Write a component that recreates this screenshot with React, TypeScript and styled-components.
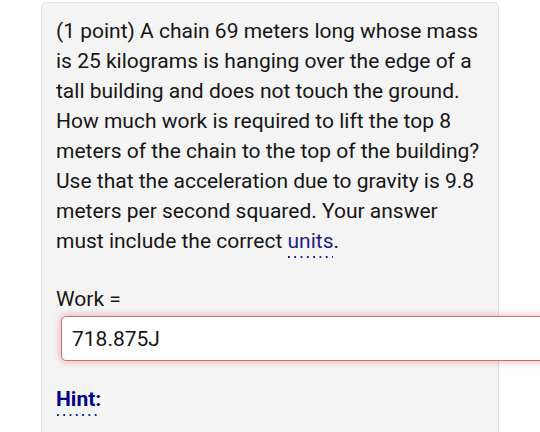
import styled, { createGlobalStyle } from 'styled-components';

const GlobalStyle = createGlobalStyle`
  html, body {
    margin: 0;
    padding: 0;
    background: #ffffff;
    overflow: hidden;
  }
  body {
    font-family: Roboto, "Liberation Sans", Arial, sans-serif;
    color: #161616;
  }
`;

const Page = styled.div`
  width: 540px;
  height: 432px;
  overflow: hidden;
  padding: 2px 0 0 41px;
  box-sizing: border-box;
`;

const Problem = styled.div`
  width: 458px;
  min-height: 460px;
  box-sizing: border-box;
  background: #f4f4f4;
  border: 1px solid #e2e2e2;
  border-radius: 5px;
  padding: 13px 14px 0 14px;
  font-size: 21px;
  line-height: 30px;
`;

const Statement = styled.p`
  margin: 0;
`;

const Link = styled.span<{ $bold?: boolean }>`
  color: ${p => (p.$bold ? '#000088' : '#1f1f8a')};
  font-weight: ${p => (p.$bold ? 700 : 400)};
  padding-bottom: 5px;
  background-image: linear-gradient(to right, #1c1c8c 2px, transparent 2px);
  background-size: 6.3px 2px;
  background-repeat: repeat-x;
  background-position: 1px 100%;
  cursor: help;
`;

const AnswerLabel = styled.div`
  margin-top: 28px;
`;

const AnswerInput = styled.div`
  margin: 2px 0 0 5px;
  width: 500px;
  height: 45px;
  box-sizing: border-box;
  background: #ffffff;
  border: 1px solid #c47272;
  border-radius: 5px;
  box-shadow: 0 0 7px 1px rgba(220, 90, 90, 0.4);
  padding: 0 10px;
  display: flex;
  align-items: center;
  font-size: 21px;
`;

const HintRow = styled.div`
  margin-top: 23px;
`;

export default function App() {
  return (
    <Page>
      <GlobalStyle />
      <Problem>
        <Statement>
          (1 point) A chain 69 meters long whose mass is 25 kilograms is hanging over the edge of a
          tall building and does not touch the ground. How much work is required to lift the top 8
          meters of the chain to the top of the building? Use that the acceleration due to gravity
          is 9.8 meters per second squared. Your answer must include the correct <Link>units</Link>.
        </Statement>
        <AnswerLabel>Work =</AnswerLabel>
        <AnswerInput>718.875J</AnswerInput>
        <HintRow>
          <Link $bold>Hint:</Link>
        </HintRow>
      </Problem>
    </Page>
  );
}
